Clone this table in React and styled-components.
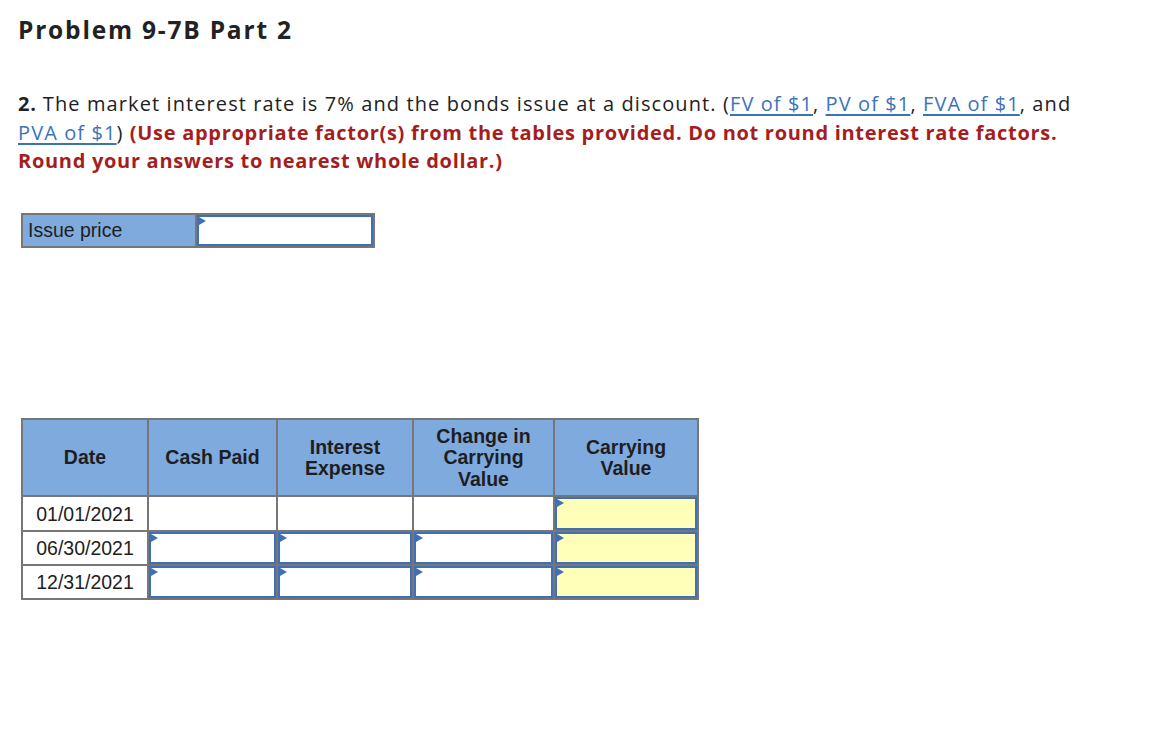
import React from "react";
import styled, { createGlobalStyle } from "styled-components";

const Global = createGlobalStyle`
  html, body { margin: 0; padding: 0; background: #fff; }
  body { font-family: "Open Sans", "Lato", sans-serif; color: #222; }
`;

const Page = styled.div`
  padding: 14px 18px 40px;
`;

const Title = styled.h1`
  margin: 0;
  font-family: "Open Sans", sans-serif;
  font-weight: 700;
  font-size: 24.5px;
  letter-spacing: 1.8px;
  line-height: 31px;
  color: #222;
`;

const Prompt = styled.p`
  margin: 45px 0 0;
  font-family: "Open Sans", sans-serif;
  font-size: 20px;
  letter-spacing: 1.1px;
  line-height: 28.5px;
  color: #222;
  white-space: nowrap;
`;

const Num = styled.b`
  font-weight: 700;
  letter-spacing: 0.7px;
`;

const Link = styled.a`
  color: #3b73b9;
  text-decoration: underline;
  text-underline-offset: 3px;
  cursor: pointer;
`;

const Note = styled.span`
  color: #a41e1e;
  font-weight: 700;
  letter-spacing: 0.7px;
`;

const CellFont = `
  font-family: "Liberation Sans", Arial, sans-serif;
  font-size: 19.5px;
  color: #1e1e1e;
`;

const IssueTable = styled.div`
  margin-top: 37px;
  margin-left: 3px;
  display: grid;
  grid-template-columns: 172px 176px;
  grid-template-rows: 31px;
  gap: 2px;
  padding: 2px;
  background: #777;
  width: max-content;
`;

const Label = styled.div`
  ${CellFont}
  background: #7faade;
  display: flex;
  align-items: center;
  padding-left: 5px;
  padding-top: 1px;
`;

const Input = styled.div`
  position: relative;
  box-sizing: border-box;
  border: 2px solid #3f6fb6;
  background: ${(p) => (p.$yellow ? "#ffffb9" : "#fff")};
  &::before {
    content: "";
    position: absolute;
    left: 0;
    top: 0;
    width: 0;
    height: 0;
    border-top: 4.5px solid transparent;
    border-bottom: 4.5px solid transparent;
    border-left: 7px solid #3f6fb6;
  }
`;

const Schedule = styled.div`
  margin-top: 170px;
  margin-left: 3px;
  display: grid;
  grid-template-columns: 124px 127px 134px 139px 142px;
  grid-template-rows: 75px 33px 32px 32px;
  gap: 2px;
  padding: 2px;
  background: #777;
  width: max-content;
`;

const Head = styled.div`
  ${CellFont}
  font-weight: 700;
  line-height: 21.5px;
  background: #7faade;
  display: flex;
  align-items: center;
  justify-content: center;
  text-align: center;
  padding-top: 2px;
`;

const DateCell = styled.div`
  ${CellFont}
  background: #fff;
  display: flex;
  align-items: center;
  justify-content: center;
  padding-top: 2px;
`;

const Blank = styled.div`
  background: #fff;
`;

const rows = [
  { date: "01/01/2021", first: true },
  { date: "06/30/2021" },
  { date: "12/31/2021" },
];

export default function App() {
  return (
    <Page>
      <Global />
      <Title>Problem 9-7B Part 2</Title>
      <Prompt>
        <Num>2.</Num> The market interest rate is 7% and the bonds issue at a
        discount. (<Link>FV of $1</Link>, <Link>PV of $1</Link>,{" "}
        <Link>FVA of $1</Link>, and
        <br />
        <Link>PVA of $1</Link>){" "}
        <Note>
          (Use appropriate factor(s) from the tables provided. Do not round
          interest rate factors.
          <br />
          Round your answers to nearest whole dollar.)
        </Note>
      </Prompt>

      <IssueTable>
        <Label>Issue price</Label>
        <Input />
      </IssueTable>

      <Schedule>
        <Head>Date</Head>
        <Head>Cash Paid</Head>
        <Head>
          Interest
          <br />
          Expense
        </Head>
        <Head>
          Change in
          <br />
          Carrying
          <br />
          Value
        </Head>
        <Head>
          Carrying
          <br />
          Value
        </Head>
        {rows.map((r) => (
          <React.Fragment key={r.date}>
            <DateCell>{r.date}</DateCell>
            {r.first ? (
              <>
                <Blank />
                <Blank />
                <Blank />
              </>
            ) : (
              <>
                <Input />
                <Input />
                <Input />
              </>
            )}
            <Input $yellow />
          </React.Fragment>
        ))}
      </Schedule>
    </Page>
  );
}
